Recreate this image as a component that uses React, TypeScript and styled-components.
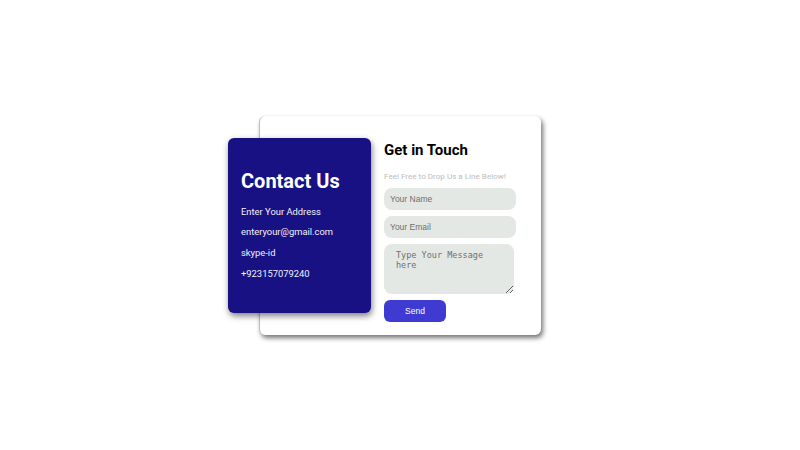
import React from "react";
import styled, { createGlobalStyle } from "styled-components";

const GlobalStyle = createGlobalStyle`
  html, body {
    margin: 0;
    padding: 0;
    background: #ffffff;
  }
  body {
    font-family: Roboto, "Liberation Sans", sans-serif;
  }
`;

const Page = styled.div`
  width: 800px;
  height: 450px;
  display: flex;
  align-items: center;
  justify-content: center;
`;

const Card = styled.div`
  box-sizing: border-box;
  width: 282px;
  height: 219px;
  background: #ffffff;
  border-radius: 6px;
  border-left: 1px solid #bdbdbd;
  box-shadow: 2px 3px 5px rgba(0, 0, 0, 0.55);
  padding: 22px 0;
  display: flex;
  align-items: flex-start;
  gap: 13px;
`;

const InfoPanel = styled.div`
  box-sizing: border-box;
  flex: none;
  width: 143px;
  height: 175px;
  margin-left: -32px;
  background: #171183;
  border-radius: 6px;
  box-shadow: 1px 3px 6px rgba(0, 0, 0, 0.5);
  color: #ffffff;
  padding: 31px 12px 0 13px;
  display: flex;
  flex-direction: column;
`;

const InfoTitle = styled.h1`
  margin: 0 0 13px;
  font-family: Roboto, sans-serif;
  font-weight: 700;
  font-size: 20px;
  line-height: 24px;
`;

const InfoLine = styled.div`
  font-family: Roboto, sans-serif;
  font-size: 9.4px;
  line-height: 12px;
  margin-bottom: 8.7px;
  color: #f2f2fa;
`;

const FormColumn = styled.form`
  display: flex;
  flex-direction: column;
  align-items: flex-start;
  margin-top: 3px;
`;

const FormTitle = styled.h2`
  margin: 0;
  font-family: Roboto, sans-serif;
  font-weight: 700;
  font-size: 15px;
  line-height: 18px;
  color: #000000;
`;

const Subtitle = styled.p`
  margin: 12px 0 7px;
  font-family: Roboto, sans-serif;
  font-size: 8.1px;
  line-height: 10px;
  color: #bdbdbd;
`;

const Field = styled.input`
  box-sizing: border-box;
  width: 132px;
  height: 22px;
  margin: 0 0 6px;
  border: none;
  outline: none;
  border-radius: 8px;
  background: #e4e8e5;
  padding: 0 6px;
  font-family: "Liberation Sans", Arial, sans-serif;
  font-size: 8.5px;
  color: #333;
  &::placeholder {
    color: #6f6f6f;
  }
`;

const MessageBox = styled.textarea`
  box-sizing: border-box;
  width: 130px;
  height: 50px;
  margin: 0 0 6px;
  border: none;
  outline: none;
  border-radius: 8px;
  background: #e4e8e5;
  padding: 6px 12px;
  font-family: "DejaVu Sans Mono", monospace;
  font-size: 8.5px;
  line-height: 10px;
  color: #333;
  resize: both;
  &::placeholder {
    color: #6f6f6f;
  }
`;

const SendButton = styled.button`
  box-sizing: border-box;
  width: 62px;
  height: 22px;
  border: none;
  border-radius: 6px;
  background: #3f3bd2;
  color: #ffffff;
  font-family: "Liberation Sans", Arial, sans-serif;
  font-size: 8.5px;
  cursor: pointer;
`;

const contacts = [
  "Enter Your Address",
  "enteryour@gmail.com",
  "skype-id",
  "+923157079240",
];

export default function App() {
  return (
    <>
      <GlobalStyle />
      <Page>
        <Card>
          <InfoPanel>
            <InfoTitle>Contact Us</InfoTitle>
            {contacts.map((c) => (
              <InfoLine key={c}>{c}</InfoLine>
            ))}
          </InfoPanel>
          <FormColumn onSubmit={(e) => e.preventDefault()}>
            <FormTitle>Get in Touch</FormTitle>
            <Subtitle>Feel Free to Drop Us a Line Below!</Subtitle>
            <Field type="text" placeholder="Your Name" />
            <Field type="email" placeholder="Your Email" />
            <MessageBox placeholder="Type Your Message here" />
            <SendButton type="submit">Send</SendButton>
          </FormColumn>
        </Card>
      </Page>
    </>
  );
}
